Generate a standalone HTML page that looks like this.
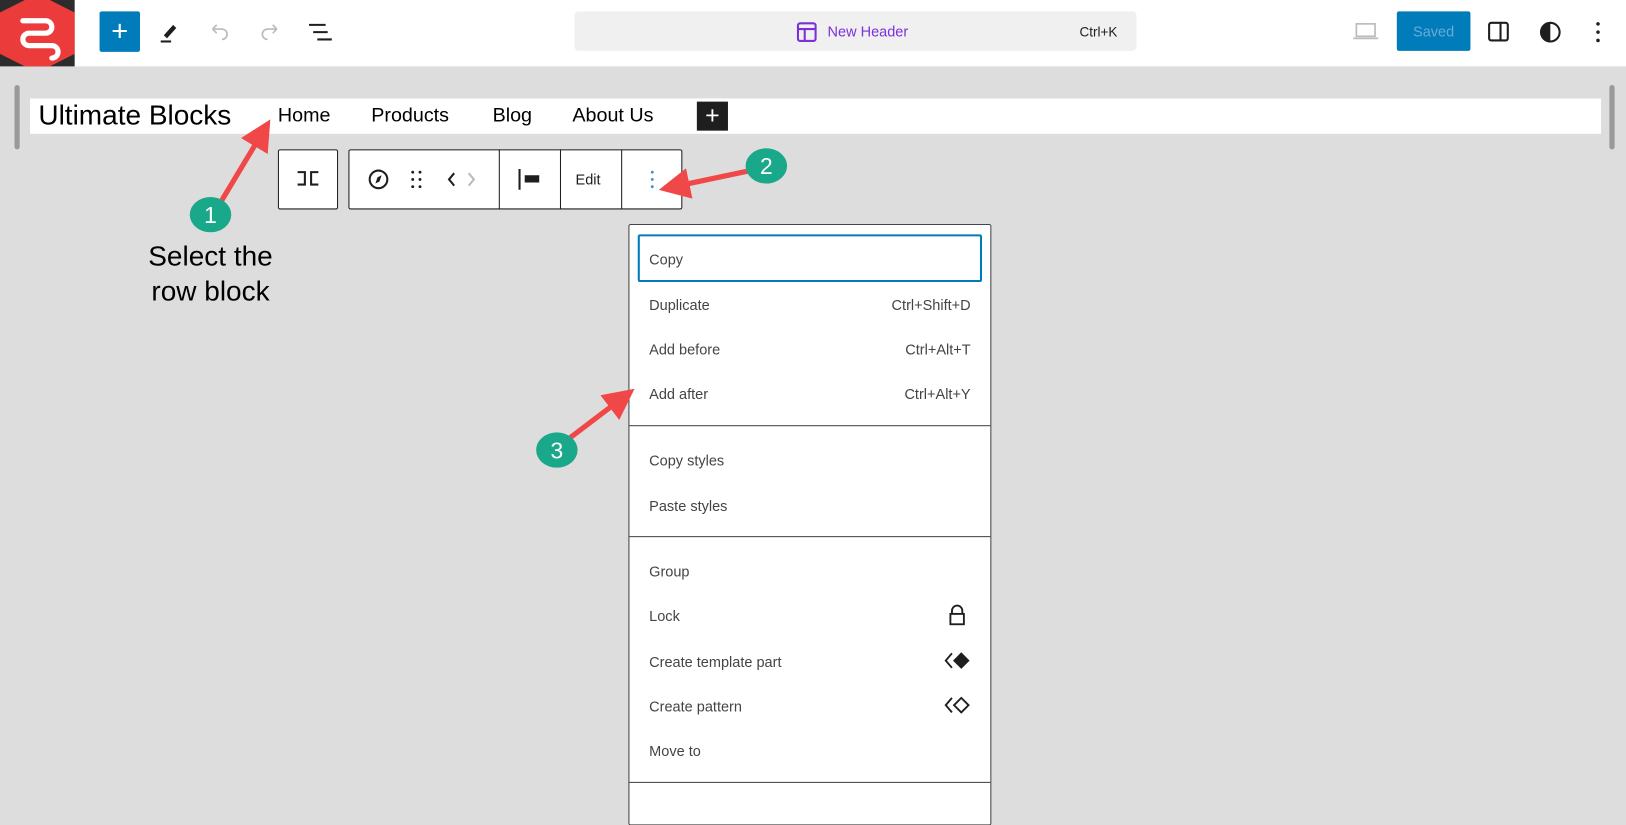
<!DOCTYPE html><html><head><meta charset="utf-8"><style>
*{margin:0;padding:0;box-sizing:border-box}
body{width:1626px;height:785px;overflow:hidden;background:#dddddd;font-family:"Liberation Sans",sans-serif;position:relative}
#w{position:absolute;left:0;top:0;width:1568px;height:757px;transform:scale(1.03699);transform-origin:0 0}
.a{position:absolute}
.top{left:0;top:0;width:1568px;height:64px;background:#fff}
.mi{position:absolute;left:626px;font-size:14px;color:#444}
.sc{position:absolute;right:632px;font-size:14px;color:#444}
.sep{position:absolute;left:0;width:100%;height:1px;background:#444}
</style></head><body><div id="w">
<div class="a top"></div>
<div class="a" style="left:0;top:0;width:72px;height:64px;background:#2c2c2c"></div>
<svg class="a" style="left:0;top:0" width="72" height="64"><polygon points="36,-6 72,12 72,52 36,70 0,52 0,12" fill="#ec3b3b"/><path d="M22 20 h22 a6 6 0 0 1 0 12 h-16 a6 6 0 0 0 0 12 h22 a6 6 0 0 1 0 12" stroke="#fff" stroke-width="5" fill="none" stroke-linecap="round"/></svg>
<div class="a" style="left:96px;top:11px;width:39px;height:39px;background:#007cba;border-radius:2px;color:#fff;font-size:28px;text-align:center;line-height:38px">+</div>
<svg class="a" style="left:150px;top:18px" width="26" height="26"><path d="M8 16 L17 6 L20 9 L11 19 Z" fill="#1e1e1e"/><rect x="5" y="21" width="10" height="2" fill="#1e1e1e"/></svg>
<svg class="a" style="left:200px;top:20px" width="24" height="24"><path d="M5 8 h9 a5 5 0 0 1 0 10 M5 8 l4-4 M5 8 l4 4" stroke="#bbb" stroke-width="1.6" fill="none"/></svg>
<svg class="a" style="left:248px;top:20px" width="24" height="24"><path d="M19 8 h-9 a5 5 0 0 0 0 10 M19 8 l-4-4 M19 8 l-4 4" stroke="#bbb" stroke-width="1.6" fill="none"/></svg>
<svg class="a" style="left:296px;top:20px" width="26" height="24"><path d="M2 4h16M6 11h14M10 18h14" stroke="#1e1e1e" stroke-width="2"/></svg>
<div class="a" style="left:554px;top:11px;width:542px;height:38px;background:#f0f0f0;border-radius:4px"></div>
<svg class="a" style="left:768px;top:21px" width="20" height="20"><rect x="1.5" y="1.5" width="17" height="17" rx="2" stroke="#7b30d9" stroke-width="2" fill="none"/><path d="M2 7h16M8 7v11" stroke="#7b30d9" stroke-width="2"/></svg>
<div class="a" style="left:798px;top:22px;font-size:14px;color:#7b30d9">New Header</div>
<div class="a" style="left:1041px;top:23px;font-size:13px;color:#1e1e1e">Ctrl+K</div>
<svg class="a" style="left:1304px;top:20px" width="26" height="20"><rect x="4" y="3" width="18" height="12" stroke="#bbb" stroke-width="1.6" fill="none"/><path d="M1 17h24" stroke="#bbb" stroke-width="1.6"/></svg>
<div class="a" style="left:1347px;top:11px;width:71px;height:38px;background:#007cba;border-radius:2px;color:#6aaad4;font-size:14px;text-align:center;line-height:38px">Saved</div>
<svg class="a" style="left:1434px;top:20px" width="24" height="22"><rect x="2" y="2" width="18" height="17" rx="2" stroke="#1e1e1e" stroke-width="2" fill="none"/><path d="M13 2v17" stroke="#1e1e1e" stroke-width="2"/></svg>
<svg class="a" style="left:1484px;top:20px" width="22" height="22"><circle cx="11" cy="11" r="9" stroke="#1e1e1e" stroke-width="2" fill="none"/><path d="M11 2a9 9 0 0 0 0 18z" fill="#1e1e1e"/></svg>
<svg class="a" style="left:1536px;top:20px" width="10" height="22"><circle cx="5" cy="3" r="1.7" fill="#1e1e1e"/><circle cx="5" cy="11" r="1.7" fill="#1e1e1e"/><circle cx="5" cy="19" r="1.7" fill="#1e1e1e"/></svg>

<div class="a" style="left:14px;top:82px;width:5px;height:62px;background:#999;border-radius:3px"></div>
<div class="a" style="left:1552px;top:82px;width:5px;height:62px;background:#999;border-radius:3px"></div>
<div class="a" style="left:29px;top:95px;width:1515px;height:34px;background:#fff"></div>
<div class="a" style="left:37px;top:96px;font-size:27px;color:#000">Ultimate Blocks</div>
<div class="a" style="left:268px;top:101px;font-size:19px;color:#000">Home</div>
<div class="a" style="left:358px;top:101px;font-size:19px;color:#000">Products</div>
<div class="a" style="left:475px;top:101px;font-size:19px;color:#000">Blog</div>
<div class="a" style="left:552px;top:101px;font-size:19px;color:#000">About Us</div>
<div class="a" style="left:672px;top:98px;width:30px;height:28px;background:#1e1e1e;color:#fff;font-size:24px;text-align:center;line-height:27px">+</div>

<div class="a" style="left:268px;top:144px;width:58px;height:58px;background:#fff;border:1px solid #1e1e1e;border-radius:2px"></div>
<svg class="a" style="left:285px;top:162px" width="24" height="20"><path d="M2 4h7v12H2M22 4h-7v12h7" stroke="#1e1e1e" stroke-width="2" fill="none"/></svg>
<div class="a" style="left:336px;top:144px;width:322px;height:58px;background:#fff;border:1px solid #1e1e1e;border-radius:2px"></div>
<div class="a" style="left:481px;top:144px;width:1px;height:58px;background:#1e1e1e"></div>
<div class="a" style="left:540px;top:144px;width:1px;height:58px;background:#1e1e1e"></div>
<div class="a" style="left:599px;top:144px;width:1px;height:58px;background:#1e1e1e"></div>
<svg class="a" style="left:354px;top:162px" width="22" height="22"><circle cx="11" cy="11" r="8.5" stroke="#1e1e1e" stroke-width="2" fill="none"/><path d="M14 7l-2 6-4 2 2-6z" fill="#1e1e1e"/></svg>
<svg class="a" style="left:394px;top:163px" width="16" height="20"><g fill="#1e1e1e"><circle cx="4" cy="3" r="1.4"/><circle cx="11" cy="3" r="1.4"/><circle cx="4" cy="10" r="1.4"/><circle cx="11" cy="10" r="1.4"/><circle cx="4" cy="17" r="1.4"/><circle cx="11" cy="17" r="1.4"/></g></svg>
<svg class="a" style="left:428px;top:162px" width="36" height="22"><path d="M10 5l-5 6 5 6" stroke="#1e1e1e" stroke-width="2" fill="none"/><path d="M24 5l5 6-5 6" stroke="#bbb" stroke-width="2" fill="none"/></svg>
<svg class="a" style="left:498px;top:160px" width="26" height="26"><path d="M3 3v20" stroke="#1e1e1e" stroke-width="2"/><rect x="8" y="9" width="14" height="7" fill="#1e1e1e"/></svg>
<div class="a" style="left:555px;top:165px;font-size:14px;color:#1e1e1e">Edit</div>
<svg class="a" style="left:624px;top:163px" width="10" height="22"><g fill="#3b8fd0"><circle cx="5" cy="3" r="1.4"/><circle cx="5" cy="10" r="1.4"/><circle cx="5" cy="17" r="1.4"/></g></svg>

<div class="a" style="left:606px;top:216px;width:350px;height:580px;background:#fff;border:1px solid #444;border-radius:2px">
<div class="a" style="left:8px;top:9px;width:332px;height:46px;border:2px solid #007cba;border-radius:2px"></div>
<div class="sep" style="top:193px"></div><div class="sep" style="top:300px"></div><div class="sep" style="top:537px"></div>
</div>
<div class="mi" style="top:242px">Copy</div>
<div class="mi" style="top:286px">Duplicate</div><div class="sc" style="top:286px">Ctrl+Shift+D</div>
<div class="mi" style="top:329px">Add before</div><div class="sc" style="top:329px">Ctrl+Alt+T</div>
<div class="mi" style="top:372px">Add after</div><div class="sc" style="top:372px">Ctrl+Alt+Y</div>
<div class="mi" style="top:436px">Copy styles</div>
<div class="mi" style="top:480px">Paste styles</div>
<div class="mi" style="top:543px">Group</div>
<div class="mi" style="top:586px">Lock</div>
<div class="mi" style="top:630px">Create template part</div>
<div class="mi" style="top:673px">Create pattern</div>
<div class="mi" style="top:716px">Move to</div>
<svg class="a" style="left:913px;top:582px" width="20" height="24"><path d="M5 10V7a5 5 0 0 1 10 0v3" stroke="#1e1e1e" stroke-width="1.8" fill="none"/><rect x="3.5" y="10" width="13" height="10" stroke="#1e1e1e" stroke-width="1.8" fill="none"/></svg>
<svg class="a" style="left:910px;top:627px" width="28" height="20"><path d="M8 3l-6 7 6 7" stroke="#1e1e1e" stroke-width="1.8" fill="none"/><path d="M17 2l8 8-8 8-8-8z" fill="#1e1e1e"/></svg>
<svg class="a" style="left:910px;top:670px" width="28" height="20"><path d="M8 3l-6 7 6 7" stroke="#1e1e1e" stroke-width="1.8" fill="none"/><path d="M17 3l7 7-7 7-7-7z" stroke="#1e1e1e" stroke-width="1.8" fill="none"/></svg>

<svg class="a" style="left:0;top:0" width="1568" height="757">
<defs><marker id="ar" markerWidth="6" markerHeight="6" refX="3" refY="3" orient="auto"><path d="M0 0L6 3 0 6z" fill="#f04848"/></marker></defs>
<g stroke="#f04848" stroke-width="5" fill="none" marker-end="url(#ar)">
<path d="M214 193 L253 128"/><path d="M726 164 L650 180"/><path d="M546 425 L600 384"/>
</g>
<g fill="#1aa88a"><ellipse cx="203" cy="207" rx="20" ry="17"/><ellipse cx="739" cy="160" rx="20" ry="17"/><ellipse cx="537" cy="434" rx="20" ry="17"/></g>
<g fill="#fff" font-family="Liberation Sans" font-size="22" text-anchor="middle"><text x="203" y="215">1</text><text x="739" y="168">2</text><text x="537" y="442">3</text></g>
<g font-family="Liberation Sans" font-size="27" text-anchor="middle" fill="#000"><text x="203" y="256">Select the</text><text x="203" y="290">row block</text></g>
</svg>
</div></body></html>
